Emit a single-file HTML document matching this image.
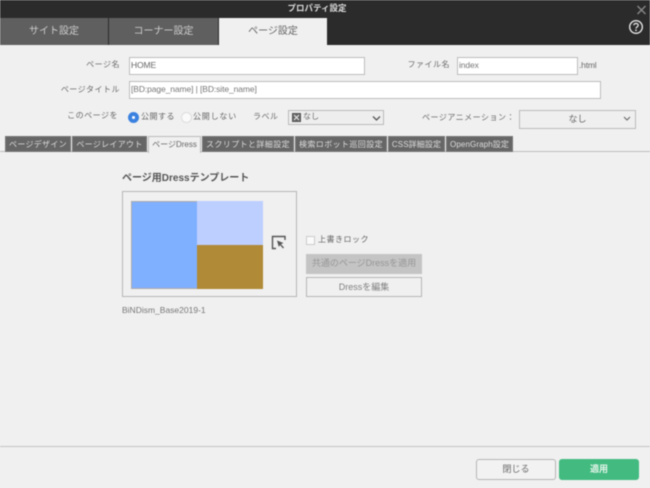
<!DOCTYPE html>
<html lang="ja"><head><meta charset="utf-8">
<style>
html,body{margin:0;padding:0;width:650px;height:488px;overflow:hidden;background:#f0f0f0}
#r{position:relative;width:650px;height:488px;overflow:hidden;background:#f0f0f0;font-family:"Liberation Sans","Noto Sans CJK JP",sans-serif;color:#666;filter:blur(.45px)}
#r div,#r span{position:absolute;box-sizing:border-box;white-space:nowrap}
.l{font-size:8px;line-height:12px;text-align:right;color:#6a6a6a;letter-spacing:.5px}
.i{background:#fff;border:1px solid #bdbdbd;font-size:8.5px;line-height:15px;padding-left:1px;color:#777;height:18px;letter-spacing:-.1px}
.t{top:136px;height:16px;background:#666;color:#ddd;font-size:8px;line-height:15px;text-align:center;border:1px solid #777;letter-spacing:.3px}
.m{top:18px;height:27px;font-size:10px;line-height:27px;text-align:center;color:#ccc;letter-spacing:0}
</style></head><body><div id="r">
<div style="left:0;top:0;width:650px;height:45px;background:#2b2b2b"></div>
<div style="left:287px;top:0;width:60px;height:18px;line-height:17px;text-align:center;font-size:8.500px;font-weight:bold;color:#ddd">プロパティ設定</div>
<div class="m" style="left:0;width:108px;background:#5f5f5f">サイト設定</div>
<div class="m" style="left:109px;width:109px;background:#5f5f5f">コーナー設定</div>
<div class="m" style="left:219px;width:108px;background:#f0f0f0;color:#666">ページ設定</div>
<svg style="position:absolute;left:636px;top:4px" width="12" height="12"><path d="M1.500 2L9.500 10M9.500 2L1.500 10" stroke="#8a8a8a" stroke-width="1.300" fill="none"/></svg>
<svg style="position:absolute;left:628px;top:19px" width="16" height="17"><circle cx="8" cy="8" r="6.300" stroke="#e4e4e4" stroke-width="1.400" fill="none"/><path d="M5.800 6.300C5.800 3.800 10.200 3.800 10.200 6.300C10.200 7.900 8 7.800 8 9.500" stroke="#e4e4e4" stroke-width="1.300" fill="none"/><circle cx="8" cy="11.300" r=".9" fill="#e4e4e4"/></svg>

<div class="l" style="left:40px;top:59px;width:80px">ページ名</div>
<div class="i" style="left:129px;top:57px;width:236px;color:#666">HOME</div>
<div class="l" style="left:380px;top:59px;width:70px">ファイル名</div>
<div class="i" style="left:457px;top:57px;width:121px">index</div>
<div class="l" style="left:579px;top:59px;letter-spacing:-.2px;font-size:8.500px">.html</div>
<div class="l" style="left:40px;top:84px;width:80px">ページタイトル</div>
<div class="i" style="left:129px;top:81px;width:472px">[BD:page_name] | [BD:site_name]</div>

<div class="l" style="left:38px;top:110px;width:80px">このページを</div>
<div style="left:128px;top:112px;width:11px;height:11px;border-radius:50%;background:#3b82e0"></div>
<div style="left:132px;top:116px;width:3px;height:3px;border-radius:50%;background:#fff"></div>
<div class="l" style="left:141px;top:111px;color:#666">公開する</div>
<div style="left:181px;top:112px;width:11px;height:11px;border-radius:50%;background:#fafafa;border:1px solid #ddd"></div>
<div class="l" style="left:193px;top:111px;color:#666;letter-spacing:.8px">公開しない</div>
<div class="l" style="left:253px;top:111px">ラベル</div>
<div style="left:288px;top:110px;width:96px;height:15px;background:#eee;border:1px solid #bbb"></div>
<div style="left:292px;top:113px;width:9px;height:9px;background:#666;border:1px solid #555"></div>
<svg style="position:absolute;left:292px;top:113px" width="9" height="9"><path d="M2 2L7 7M7 2L2 7" stroke="#eee" stroke-width="1"/></svg>
<div class="l" style="left:303px;top:111px;letter-spacing:0;font-size:8px">なし</div>
<svg style="position:absolute;left:372px;top:115px" width="9" height="7"><path d="M1 1.500L4.500 5L8 1.500" stroke="#555" stroke-width="1.300" fill="none"/></svg>
<div class="l" style="left:422px;top:112px">ページアニメーション：</div>
<div style="left:519px;top:110px;width:117px;height:19px;background:#efefef;border:1px solid #bbb;font-size:9px;line-height:16px;text-align:center;color:#666">なし</div>
<svg style="position:absolute;left:623px;top:116px" width="8" height="6"><path d="M1 1L4 4L7 1" stroke="#666" stroke-width="1.100" fill="none"/></svg>

<div style="left:0;top:151px;width:650px;height:1px;background:#bcbcbc"></div>
<div class="t" style="left:5px;width:66px">ページデザイン</div>
<div class="t" style="left:72px;width:75px">ページレイアウト</div>
<div class="t" style="left:148px;width:53px;background:#f0f0f0;color:#666;border-color:#bbb;border-bottom:none;height:17px;letter-spacing:0">ページDress</div>
<div class="t" style="left:202px;width:92px;letter-spacing:.4px">スクリプトと詳細設定</div>
<div class="t" style="left:295px;width:92px;letter-spacing:.4px">検索ロボット巡回設定</div>
<div class="t" style="left:388px;width:57px;letter-spacing:.1px">CSS詳細設定</div>
<div class="t" style="left:446px;width:67px;letter-spacing:.1px">OpenGraph設定</div>

<div style="left:122px;top:172px;font-size:10px;line-height:14px;font-weight:bold;color:#555">ページ用Dressテンプレート</div>
<div style="left:122px;top:191px;width:175px;height:106px;background:#f0f0f0;border:1px solid #b5b5b5"></div>
<div style="left:131px;top:201px;width:132px;height:88px;background:#7fb0ff;border:1px solid #aaa"></div>
<div style="left:197px;top:201px;width:66px;height:45px;background:#bdcfff"></div>
<div style="left:197px;top:245px;width:66px;height:44px;background:#b08a36"></div>
<svg style="position:absolute;left:271px;top:235px" width="16" height="16"><path d="M5 13.500H1.500V1.500H14V5" stroke="#555" stroke-width="1.400" fill="none"/><path d="M6 5.500L12.500 8L10 9.200L13 12.500L12 13.500L9 10L7.800 12Z" fill="#555"/></svg>
<div style="left:306px;top:236px;width:9px;height:9px;background:#fafafa;border:1px solid #ccc"></div>
<div class="l" style="left:318px;top:234px;color:#666">上書きロック</div>
<div style="left:306px;top:254px;width:116px;height:20px;background:#c4c4c4;font-size:9px;line-height:19px;text-align:center;color:#969696">共通のページDressを適用</div>
<div style="left:306px;top:277px;width:116px;height:20px;background:#f0f0f0;border:1px solid #b5b5b5;font-size:9px;line-height:18px;text-align:center;color:#808080">Dressを編集</div>
<div style="left:122px;top:304px;font-size:8.500px;line-height:12px;color:#777">BiNDism_Base2019-1</div>

<div style="left:0;top:446px;width:650px;height:1px;background:#c4c4c4"></div>
<div style="left:476px;top:459px;width:80px;height:21px;background:#f2f2f2;border:1px solid #b5b5b5;border-radius:3px;font-size:9px;line-height:19px;text-align:center;color:#666">閉じる</div>
<div style="left:559px;top:459px;width:80px;height:21px;background:#43bb80;border-radius:3px;font-size:9px;font-weight:bold;line-height:21px;text-align:center;color:#e6f5ec">適用</div>
</div></body></html>
